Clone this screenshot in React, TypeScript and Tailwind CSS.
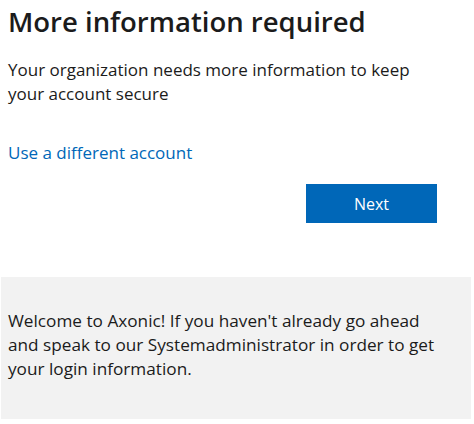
import React from "react";

export default function App() {
  return (
    <div
      className="w-[474px] h-[424px] bg-white text-[#1b1b1b] overflow-hidden"
      style={{ fontFamily: '"Open Sans", "Noto Sans", sans-serif' }}
    >
      <div className="pl-2 pr-[37px]">
        <h1 className="pt-1 text-[27.5px] leading-[36px] font-semibold">More information required</h1>
        <p className="mt-[18px] text-[17px] leading-[24px]">
          Your organization needs more information to keep your account secure
        </p>
        <a href="#" className="mt-[35px] block text-[17px] leading-[24px] text-[#0067b8]">
          Use a different account
        </a>
        <div className="mt-[19px] flex justify-end">
          <button className="w-[131px] h-[39px] bg-[#0067b8] text-white text-[16px]">Next</button>
        </div>
      </div>
      <div className="mt-[54px] ml-px w-[470px] h-[142px] bg-[#f2f2f2] pl-[7px] pr-[31px] pt-8">
        <p className="text-[17.2px] leading-[24px]">
          Welcome to Axonic! If you haven't already go ahead and speak to our Systemadministrator in order to get your login information.
        </p>
      </div>
    </div>
  );
}
